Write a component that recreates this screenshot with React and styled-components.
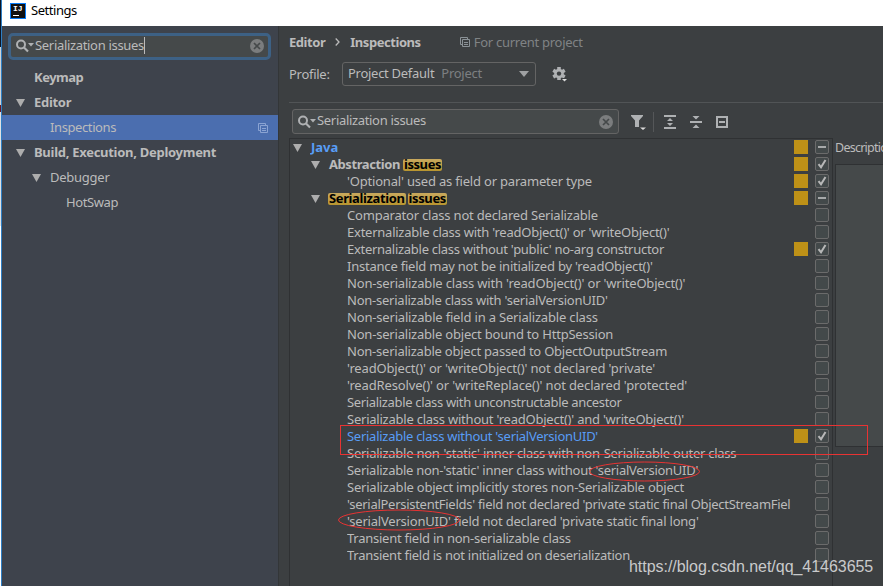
import React, { useState } from "react";
import styled, { createGlobalStyle } from "styled-components";

// track: letter spacing of the label in px
const rows = [
    { level: 0, text: "Java", arrow: true, bold: true, blue: true, severity: true, check: "mixed", track: 0 },
    { level: 1, text: "Abstraction issues", arrow: true, bold: true, marks: ["issues"], severity: true, check: "on", track: -0.42 },
    { level: 2, text: "'Optional' used as field or parameter type", severity: true, check: "on", track: -0.19 },
    { level: 1, text: "Serialization issues", arrow: true, bold: true, marks: ["Serialization", "issues"], severity: true, check: "mixed", track: -0.38 },
    { level: 2, text: "Comparator class not declared Serializable", track: -0.2 },
    { level: 2, text: "Externalizable class with 'readObject()' or 'writeObject()'", track: -0.24 },
    { level: 2, text: "Externalizable class without 'public' no-arg constructor", severity: true, check: "on", track: -0.28 },
    { level: 2, text: "Instance field may not be initialized by 'readObject()'", track: -0.22 },
    { level: 2, text: "Non-serializable class with 'readObject()' or 'writeObject()'", track: -0.18 },
    { level: 2, text: "Non-serializable class with 'serialVersionUID'", track: -0.24 },
    { level: 2, text: "Non-serializable field in a Serializable class", track: -0.18 },
    { level: 2, text: "Non-serializable object bound to HttpSession", track: -0.2 },
    { level: 2, text: "Non-serializable object passed to ObjectOutputStream", track: -0.23 },
    { level: 2, text: "'readObject()' or 'writeObject()' not declared 'private'", track: -0.15 },
    { level: 2, text: "'readResolve()' or 'writeReplace()' not declared 'protected'", track: -0.135 },
    { level: 2, text: "Serializable class with unconstructable ancestor", track: -0.34 },
    { level: 2, text: "Serializable class without 'readObject()' and 'writeObject()'", track: -0.23 },
    { level: 2, text: "Serializable class without 'serialVersionUID'", blue: true, severity: true, check: "on", track: -0.27 },
    { level: 2, text: "Serializable non-'static' inner class with non-Serializable outer class", track: -0.25 },
    { level: 2, text: "Serializable non-'static' inner class without 'serialVersionUID'", track: -0.27 },
    { level: 2, text: "Serializable object implicitly stores non-Serializable object", track: -0.22 },
    { level: 2, text: "'serialPersistentFields' field not declared 'private static final ObjectStreamFiel", track: -0.28 },
    { level: 2, text: "'serialVersionUID' field not declared 'private static final long'", track: -0.21 },
    { level: 2, text: "Transient field in non-serializable class", track: -0.25 },
    { level: 2, text: "Transient field is not initialized on deserialization", track: -0.26 },
];

const SearchIcon = () => (
    <svg width="20" height="16" viewBox="0 0 20 16">
        <circle cx="6" cy="6.5" r="4" fill="none" stroke="#afb1b3" strokeWidth="2" />
        <path d="M9 9.5L13 13.5" stroke="#afb1b3" strokeWidth="2.2" />
        <path d="M13 5h6l-3 3.5z" fill="#afb1b3" />
    </svg>
);

const ClearIcon = () => (
    <svg width="14" height="14" viewBox="0 0 14 14">
        <circle cx="7" cy="7" r="7" fill="#7b7d7e" />
        <path d="M4 4l6 6M10 4l-6 6" stroke="#45494a" strokeWidth="1.7" />
    </svg>
);

const CopyIcon = ({ color }) => (
    <svg width="10" height="10" viewBox="0 0 10 10" fill="none" stroke={color}>
        <path d="M2.5 7.5h-2v-7h7v2" />
        <path d="M2.5 2.5h7v7h-7zM4 5.5h4M4 7.5h4" />
    </svg>
);

const Triangle = () => (
    <svg width="9" height="8" viewBox="0 0 9 8"><path d="M0 0h9L4.5 8z" fill="#adadad" /></svg>
);

const GearIcon = () => (
    <svg width="17" height="17" viewBox="0 0 17 17">
        <path d="M5.2 1h3.6v2.1l1.2.7 1.9-1 1.7 3-1.8 1.1v1.4l1.8 1.1-1.7 3-1.9-1-1.2.7v2H5.2v-2l-1.2-.7-1.9 1-1.7-3 1.8-1.1V6.9L.4 5.8l1.7-3 1.9 1 1.2-.7z" fill="#afb1b3" />
        <circle cx="7" cy="7.6" r="2.2" fill="#3c3f41" />
        <path d="M9 12h7l-2.5 3.5z" fill="#3c3f41" />
        <path d="M10 13h5l-2.5 2.5z" fill="#dcdcdc" />
    </svg>
);

const FilterIcon = () => (
    <svg width="16" height="16" viewBox="0 0 16 16">
        <path d="M0 1h12v1L8 6.500V13H4V6.500L0 2z" fill="#afb1b3" />
        <path d="M9 13.500h6L12 16z" fill="#dcdcdc" />
    </svg>
);

const ExpandIcon = () => (
    <svg width="12" height="14" viewBox="0 0 12 14" fill="#afb1b3">
        <path d="M0 0h12v2H0zM0 12h12v2H0zM6 3l3 3H3zM6 11l3-3H3z" />
    </svg>
);

const CollapseIcon = () => (
    <svg width="12" height="12" viewBox="0 0 12 12" fill="#afb1b3">
        <path d="M0 5h12v2H0zM2.500 0h7L6 3.500zM2.500 12h7L6 8.500z" />
    </svg>
);

const ResetIcon = () => (
    <svg width="12" height="12" viewBox="0 0 12 12">
        <path d="M1 1h10v10H1z" fill="none" stroke="#afb1b3" strokeWidth="2" />
        <path d="M3 5h6v2H3z" fill="#afb1b3" />
    </svg>
);

const CheckMark = ({ state }) => {
    if (state === "on") {
        return <svg width="10" height="10" viewBox="0 0 10 10"><path d="M1.500 5.200L4 8.200 8.500 1" fill="none" stroke="#b8b8b8" strokeWidth="2" /></svg>;
    }
    if (state === "mixed") {
        return <svg width="8" height="2" viewBox="0 0 8 2"><path d="M0 0h8v2H0z" fill="#a7a9aa" /></svg>;
    }
    return null;
};

const InspectionLabel = ({ row }) => {
    if (!row.marks) return row.text;
    return row.text.split(" ").map((word, i) => (
        <React.Fragment key={word}>
            {i > 0 && <WordGap />}
            {row.marks.includes(word) ? <Mark>{word}</Mark> : word}
        </React.Fragment>
    ));
};

const App = () => {
    const [checks, setChecks] = useState(rows.map((row) => row.check));

    const toggle = (index) => {
        setChecks(checks.map((c, i) => (i === index ? (c === "on" ? undefined : "on") : c)));
    };

    return (
        <Window>
            <GlobalStyle />
            <Edge />
            <Frame>
                <TitleBar>
                    <Logo><LogoText>IJ</LogoText><LogoLine /></Logo>
                    Settings
                </TitleBar>
                <Body>
                    <Sidebar>
                        <SideSearch>
                            <SearchIcon />
                            <SearchText>Serialization issues<Caret /></SearchText>
                            <ClearIcon />
                        </SideSearch>
                        <SideRow $pad={32} $bold $track={-0.5}>Keymap</SideRow>
                        <SideRow $pad={14} $bold $track={-0.3}><Triangle /><span>Editor</span></SideRow>
                        <SideRow $pad={48} $selected $track={-0.4}>
                            <SideLabel>Inspections</SideLabel>
                            <CopyIcon color="#8aa3d2" />
                        </SideRow>
                        <SideRow $pad={14} $bold $track={-0.28}><Triangle /><span>Build, Execution, Deployment</span></SideRow>
                        <SideRow $pad={30} $track={-0.25}><Triangle /><span>Debugger</span></SideRow>
                        <SideRow $pad={64} $track={-0.4}>HotSwap</SideRow>
                    </Sidebar>
                    <Main>
                        <Breadcrumb>
                            <b>Editor</b>
                            <svg width="5" height="8" viewBox="0 0 5 8"><path d="M.7.5L4 4 .7 7.500" fill="none" stroke="#bbb" strokeWidth="1.300" /></svg>
                            <b>Inspections</b>
                            <Scope><CopyIcon color="#8b9297" />For current project</Scope>
                        </Breadcrumb>
                        <ProfileRow>
                            <ProfileLabel>Profile:</ProfileLabel>
                            <Select>
                                <span>Project Default</span>
                                <Hint>Project</Hint>
                                <svg width="10" height="6" viewBox="0 0 10 6"><path d="M0 0h10L5 6z" fill="#9fa1a3" /></svg>
                            </Select>
                            <GearIcon />
                        </ProfileRow>
                        <Toolbar>
                            <TreeSearch>
                                <SearchIcon />
                                <SearchText>Serialization issues</SearchText>
                                <ClearIcon />
                            </TreeSearch>
                            <FilterIcon />
                            <ToolDivider />
                            <Tools><ExpandIcon /><CollapseIcon /><ResetIcon /></Tools>
                        </Toolbar>
                        <Content>
                            <Tree>
                                {rows.map((row, i) => (
                                    <TreeRow key={row.text} $level={row.level}>
                                        {row.arrow && <Triangle />}
                                        <TreeLabel $bold={row.bold} $blue={row.blue} $arrow={row.arrow} $track={row.track}>
                                            <InspectionLabel row={row} />
                                        </TreeLabel>
                                        {row.severity && <Severity />}
                                        <Checkbox onClick={() => toggle(i)}><CheckMark state={checks[i]} /></Checkbox>
                                    </TreeRow>
                                ))}
                            </Tree>
                            <Details>
                                <DetailsTitle>Descriptio</DetailsTitle>
                                <DetailsBody />
                            </Details>
                        </Content>
                    </Main>
                </Body>
            </Frame>
            <Annotations width="883" height="586" viewBox="0 0 883 586">
                <rect x="340.5" y="425.5" width="527" height="29" />
                <ellipse cx="644.5" cy="471.500" rx="55" ry="9.500" />
                <ellipse cx="399" cy="520" rx="60.500" ry="10" />
            </Annotations>
            <Watermark>https://blog.csdn.net/qq_41463655</Watermark>
        </Window>
    );
};

const GlobalStyle = createGlobalStyle`
    body {
        margin: 0;
        overflow: hidden;
    }
    * {
        box-sizing: border-box;
    }
    svg {
        display: block;
        flex-shrink: 0;
    }
`
const Window = styled.div`
    display: flex;
    position: relative;
    width: 883px;
    height: 586px;
    overflow: hidden;
    background: #3c3f41;
    color: #bbbbbb;
    font-family: "Noto Sans", "Open Sans", sans-serif;
    font-size: 13px;
    line-height: 17px;
    white-space: nowrap;
`
const Edge = styled.div`
    width: 2px;
    background: linear-gradient(#0b1526 0 47px, #d0d3d6 47px 105px, #6b1720 105px 112px, #dfe1e3 112px 226px, #ffffff 226px);
    border-right: 1px solid #2f7fc4;
`
const Frame = styled.div`
    display: flex;
    flex: 1;
    flex-direction: column;
    min-width: 0;
`
const TitleBar = styled.div`
    display: flex;
    height: 26px;
    flex-shrink: 0;
    align-items: center;
    gap: 5px;
    padding: 0 8px 5px;
    background: white;
    color: #000;
    letter-spacing: -0.45px;
`
const Logo = styled.div`
    display: flex;
    width: 16px;
    height: 16px;
    flex-direction: column;
    justify-content: space-between;
    padding: 1px 1px 2px 2px;
    border: 1px solid #087cfa;
    background: #111;
`
const LogoText = styled.div`
    color: white;
    font: bold 8px/7px "Liberation Mono", monospace;
    letter-spacing: 0;
`
const LogoLine = styled.div`
    width: 6px;
    height: 1px;
    background: white;
`
const Body = styled.div`
    display: flex;
    flex: 1;
    min-height: 0;
`
const Sidebar = styled.div`
    width: 277px;
    flex-shrink: 0;
    padding-top: 7px;
    border-right: 1px solid #333638;
    background: #3e434c;
`
const SearchBox = styled.div`
    display: flex;
    align-items: center;
    background: #45494a;
    letter-spacing: -0.32px;
`
const SideSearch = styled(SearchBox)`
    width: 263px;
    height: 27px;
    margin: 0 0 5px 6px;
    padding: 0 4px 1px;
    border: 3px solid #3d6185;
    border-radius: 5px;
`
const TreeSearch = styled(SearchBox)`
    width: 327px;
    height: 25px;
    padding: 0 5px 0 4px;
    margin-right: 12px;
    border: 1px solid #646464;
    border-radius: 3px;
`
const SearchText = styled.div`
    display: flex;
    flex: 1;
    align-items: center;
    margin-top: -2px;
`
const Caret = styled.span`
    width: 1px;
    height: 17px;
    background: #bbbbbb;
`
const SideRow = styled.div`
    display: flex;
    width: 276px;
    height: 25px;
    align-items: center;
    gap: 9px;
    padding-right: 10px;
    padding-left: ${({ $pad }) => $pad}px;
    background: ${({ $selected }) => ($selected ? "#4b6eaf" : "transparent")};
    font-weight: ${({ $bold }) => ($bold ? 700 : 400)};
    letter-spacing: ${({ $track }) => $track}px;
`
const SideLabel = styled.span`
    flex: 1;
`
const Main = styled.div`
    display: flex;
    flex: 1;
    flex-direction: column;
    min-width: 0;
    padding-left: 10px;
`
const Breadcrumb = styled.div`
    display: flex;
    height: 34px;
    align-items: center;
    gap: 10px;
    padding-bottom: 2px;
    letter-spacing: -0.45px;
`
const Scope = styled.div`
    display: flex;
    align-items: center;
    gap: 4px;
    margin-left: 29px;
    color: #808385;
    letter-spacing: -0.27px;
`
const ProfileRow = styled.div`
    display: flex;
    height: 43px;
    flex-shrink: 0;
    align-items: flex-start;
    padding-top: 2px;
    border-bottom: 1px solid #515456;
    letter-spacing: -0.28px;
    & > svg {
        margin: 4px 0 0 16px;
    }
`
const ProfileLabel = styled.div`
    width: 53px;
    line-height: 25px;
`
const Select = styled.div`
    display: flex;
    width: 194px;
    height: 24px;
    align-items: center;
    padding: 0 6px 0 5px;
    border: 1px solid #646464;
    border-radius: 3px;
    line-height: 16px;
    & > span {
        margin-top: -2px;
    }
`
const Hint = styled.span`
    flex: 1;
    margin-left: 7px;
    color: #7c7f81;
`
const Toolbar = styled.div`
    display: flex;
    height: 35px;
    flex-shrink: 0;
    align-items: center;
    padding: 2px 0 0 3px;
`
const ToolDivider = styled.div`
    width: 1px;
    height: 20px;
    margin: 0 10px 0 6px;
    background: #555759;
`
const Tools = styled.div`
    display: flex;
    align-items: center;
    gap: 14px;
`
const Content = styled.div`
    display: flex;
    flex: 1;
    min-height: 0;
`
const Tree = styled.div`
    width: 544px;
    flex-shrink: 0;
    overflow: hidden;
    border: 1px solid #2f3133;
    border-bottom: 0;
`
const TreeRow = styled.div`
    display: flex;
    height: 17px;
    align-items: center;
    padding-right: 3px;
    padding-left: ${({ $level }) => [3, 21, 57][$level]}px;
`
const TreeLabel = styled.div`
    flex: 1;
    overflow: hidden;
    margin-left: ${({ $arrow }) => ($arrow ? 8 : 0)}px;
    padding-left: ${({ $arrow }) => ($arrow ? 1 : 0)}px;
    color: ${({ $blue }) => ($blue ? "#589df6" : "#bbbbbb")};
    font-weight: ${({ $bold }) => ($bold ? 700 : 400)};
    letter-spacing: ${({ $track }) => $track}px;
`
const Mark = styled.span`
    display: inline-block;
    height: 12px;
    margin: 0 -1px;
    padding: 0 1px;
    border-radius: 2px;
    background: linear-gradient(#c9a95e, #b8952f);
    color: #000;
    line-height: 11px;
`
const WordGap = styled.span`
    display: inline-block;
    width: 4px;
`
const Severity = styled.div`
    width: 14px;
    height: 14px;
    margin: -1px 7px 0 0;
    background: #be9117;
`
const Checkbox = styled.div`
    display: flex;
    width: 14px;
    height: 14px;
    flex-shrink: 0;
    align-items: center;
    justify-content: center;
    margin-top: -1px;
    border: 1px solid #6b6b6b;
    border-radius: 2px;
    background: #43494a;
`
const Details = styled.div`
    flex: 1;
    min-width: 0;
    overflow: hidden;
    padding-left: 2px;
`
const DetailsTitle = styled.div`
    height: 26px;
    padding-top: 1px;
    font-size: 12.5px;
    letter-spacing: -0.75px;
`
const DetailsBody = styled.div`
    height: 283px;
    border: 1px solid #2f3133;
    border-right: 0;
    background: #45494a;
`
const Annotations = styled.svg`
    position: absolute;
    top: 0;
    left: 0;
    pointer-events: none;
    fill: none;
    stroke: #e83333;
`
const Watermark = styled.div`
    position: absolute;
    top: 557px;
    left: 629px;
    color: #c9cacb;
    font-family: "Liberation Sans", sans-serif;
    font-size: 16px;
    letter-spacing: -0.04px;
    line-height: 20px;
`

export default App;
